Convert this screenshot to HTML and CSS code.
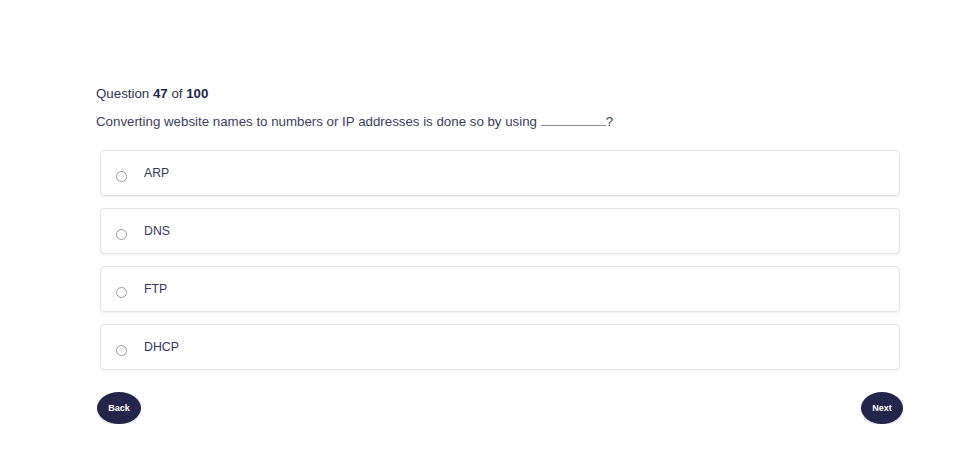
FILE: index.html
```html
<!DOCTYPE html>
<html lang="en">
<head>
    <meta charset="UTF-8">
    <meta name="viewport" content="width=device-width, initial-scale=1.0">
    <title>Quiz</title>
    <link rel="stylesheet" href="styles.css">
</head>
<body>
    <div id="quiz-container">
        <div class="question-count">Question <b>47</b> of <b>100</b></div>
        <div class="question-text">Converting website names to numbers or IP addresses is done so by using <span class="blank"></span>?</div>
        <div class="options">
            <label class="option"><input type="radio" name="answer"> <span>ARP</span></label>
            <label class="option"><input type="radio" name="answer"> <span>DNS</span></label>
            <label class="option"><input type="radio" name="answer"> <span>FTP</span></label>
            <label class="option"><input type="radio" name="answer"> <span>DHCP</span></label>
        </div>
        <div class="nav">
            <button class="nav-btn">Back</button>
            <button class="nav-btn">Next</button>
        </div>
    </div>
</body>
</html>
```

FILE: styles.css
```css
body {
    margin: 0;
    padding: 0;
    background: #fff;
    font-family: "Liberation Sans", Arial, sans-serif;
    color: #3b3e5e;
}

#quiz-container {
    width: 807px;
    margin: 0 0 0 96px;
    padding-top: 87px;
}

.question-count {
    font-size: 13.3px;
    line-height: 14px;
    color: #2f3252;
}

.question-count b {
    color: #23264a;
}

.question-text {
    margin-top: 14px;
    font-size: 13.3px;
    line-height: 14px;
}

.blank {
    display: inline-block;
    width: 65px;
    border-bottom: 1px solid #8a8c9c;
    margin-left: 0;
}

.options {
    margin: 21px 3px 0 4px;
    display: flex;
    flex-direction: column;
    gap: 12px;
}

.option {
    display: flex;
    align-items: center;
    height: 44px;
    border: 1px solid #e4e4e8;
    border-radius: 4px;
    box-shadow: 0 1px 2px rgba(0, 0, 0, 0.05);
    padding-left: 15px;
    font-size: 12.3px;
}

.option input {
    appearance: none;
    width: 11px;
    height: 11px;
    margin: 7px 0 0 0;
    border: 1px solid #9a9aa2;
    border-radius: 50%;
    background: #fff;
}

.option span {
    margin-left: 17px;
    margin-bottom: 1px;
    color: #33365a;
}

.nav {
    display: flex;
    justify-content: space-between;
    margin-top: 22px;
    padding-left: 1px;
}

.nav-btn {
    width: 44px;
    height: 32px;
    border: none;
    border-radius: 50%;
    background: #23264a;
    color: #fff;
    font-family: "Liberation Sans", Arial, sans-serif;
    font-size: 9px;
    font-weight: bold;
    padding: 0;
    box-shadow: 0 1px 2px rgba(0, 0, 0, 0.2);
}

.nav-btn:last-child {
    width: 42px;
}
```
